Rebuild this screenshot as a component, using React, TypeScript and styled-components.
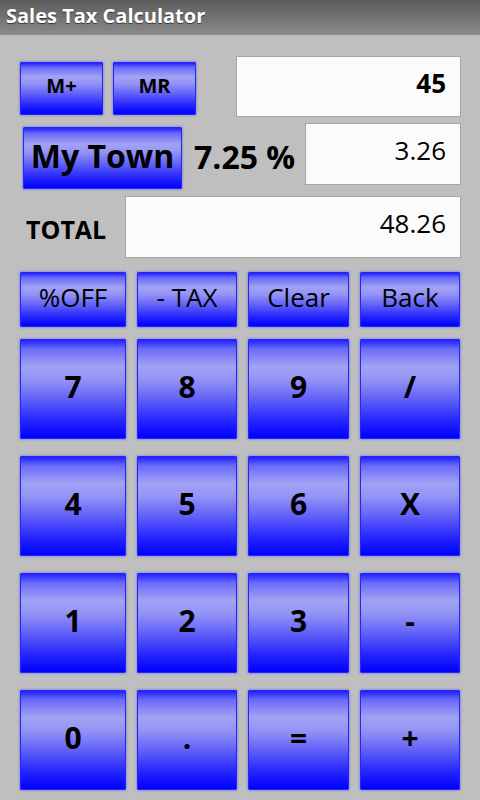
import styled, { createGlobalStyle } from 'styled-components';

const GlobalStyle = createGlobalStyle`
  html, body {
    margin: 0;
    padding: 0;
    background: #bfbfbf;
  }
  * {
    box-sizing: border-box;
  }
`;

const font = `"Open Sans", "Noto Sans", "DejaVu Sans", sans-serif`;

const Screen = styled.div`
  width: 480px;
  height: 800px;
  background: #bfbfbf;
  font-family: ${font};
  overflow: hidden;
`;

const TitleBar = styled.div`
  height: 35px;
  background: linear-gradient(to bottom, #5c5c5c 0%, #727272 50%, #8c8c8c 100%);
  color: #ffffff;
  font-size: 20px;
  font-weight: 700;
  line-height: 32px;
  padding-left: 6px;
  text-shadow: 0 1px 1px rgba(0, 0, 0, 0.6);
`;

const Content = styled.div`
  padding: 21px 19px 0 20px;
  display: flex;
  flex-direction: column;
`;

const Row = styled.div<{ $top?: number; $align?: string }>`
  display: flex;
  align-items: ${({ $align }) => $align || 'center'};
  margin-top: ${({ $top }) => $top || 0}px;
`;

const Spacer = styled.div`
  flex: 1;
`;

const Button = styled.button<{
  $w?: number;
  $h: number;
  $size: number;
  $bold?: boolean;
}>`
  width: ${({ $w }) => ($w ? `${$w}px` : '100%')};
  height: ${({ $h }) => $h}px;
  flex-shrink: 0;
  padding: 0 0 5px 0;
  border: 1px solid #2424ff;
  border-radius: 1px;
  box-shadow: 0 0 2px 1px rgba(110, 110, 230, 0.55);
  background: linear-gradient(
    to bottom,
    #2020ff 0%,
    #6a6afa 9%,
    #a2a2f5 27%,
    #9494f6 40%,
    #6262f9 60%,
    #2626fd 82%,
    #0000ff 100%
  );
  color: #000000;
  font-family: ${font};
  font-size: ${({ $size }) => $size}px;
  font-weight: ${({ $bold }) => ($bold ? 700 : 400)};
  line-height: 1;
  display: flex;
  align-items: center;
  justify-content: center;
  cursor: pointer;
`;

const MemGroup = styled.div`
  display: flex;
  gap: 10px;
  margin-top: 6px;
`;

const TownSlot = styled.div`
  padding-left: 3px;
  padding-top: 4px;
`;

const Field = styled.div<{ $w: number; $h: number; $bold?: boolean }>`
  width: ${({ $w }) => $w}px;
  height: ${({ $h }) => $h}px;
  flex-shrink: 0;
  background: #fbfbfb;
  border: 1px solid #a6a6a6;
  display: flex;
  align-items: center;
  justify-content: flex-end;
  padding: 0 14px 8px 0;
  font-size: 26px;
  font-weight: ${({ $bold }) => ($bold ? 700 : 400)};
  color: #000000;
`;

const Rate = styled.div`
  align-self: center;
  font-size: 32px;
  font-weight: 700;
  color: #000000;
  margin-left: 12px;
  white-space: nowrap;
`;

const TotalLabel = styled.div`
  width: 105px;
  padding-left: 6px;
  font-size: 25px;
  font-weight: 700;
  color: #000000;
  padding-top: 4px;
`;

const Grid = styled.div<{ $rowH: number; $top: number; $gapY: number }>`
  display: grid;
  grid-template-columns: 106px 100px 101px 100px;
  grid-auto-rows: ${({ $rowH }) => $rowH}px;
  column-gap: 11px;
  row-gap: ${({ $gapY }) => $gapY}px;
  margin-top: ${({ $top }) => $top}px;
`;

const functionKeys = ['%OFF', '- TAX', 'Clear', 'Back'];
const keypad = ['7', '8', '9', '/', '4', '5', '6', 'X', '1', '2', '3', '-', '0', '.', '=', '+'];

export default function App() {
  return (
    <Screen>
      <GlobalStyle />
      <TitleBar>Sales Tax Calculator</TitleBar>
      <Content>
        <Row $align="flex-start">
          <MemGroup>
            <Button $w={83} $h={53} $size={20} $bold>
              M+
            </Button>
            <Button $w={83} $h={53} $size={20} $bold>
              MR
            </Button>
          </MemGroup>
          <Spacer />
          <Field $w={225} $h={61} $bold>
            45
          </Field>
        </Row>
        <Row $top={6} $align="flex-start">
          <TownSlot>
            <Button $w={159} $h={62} $size={32} $bold>
              My Town
            </Button>
          </TownSlot>
          <Rate>7.25 %</Rate>
          <Spacer />
          <Field $w={156} $h={62}>
            3.26
          </Field>
        </Row>
        <Row $top={7}>
          <TotalLabel>TOTAL</TotalLabel>
          <Field $w={336} $h={62}>
            48.26
          </Field>
        </Row>
        <Grid $rowH={55} $top={14} $gapY={0}>
          {functionKeys.map((k) => (
            <Button key={k} $h={55} $size={26}>
              {k}
            </Button>
          ))}
        </Grid>
        <Grid $rowH={100} $top={12} $gapY={17}>
          {keypad.map((k) => (
            <Button key={k} $h={100} $size={30} $bold>
              {k}
            </Button>
          ))}
        </Grid>
      </Content>
    </Screen>
  );
}
